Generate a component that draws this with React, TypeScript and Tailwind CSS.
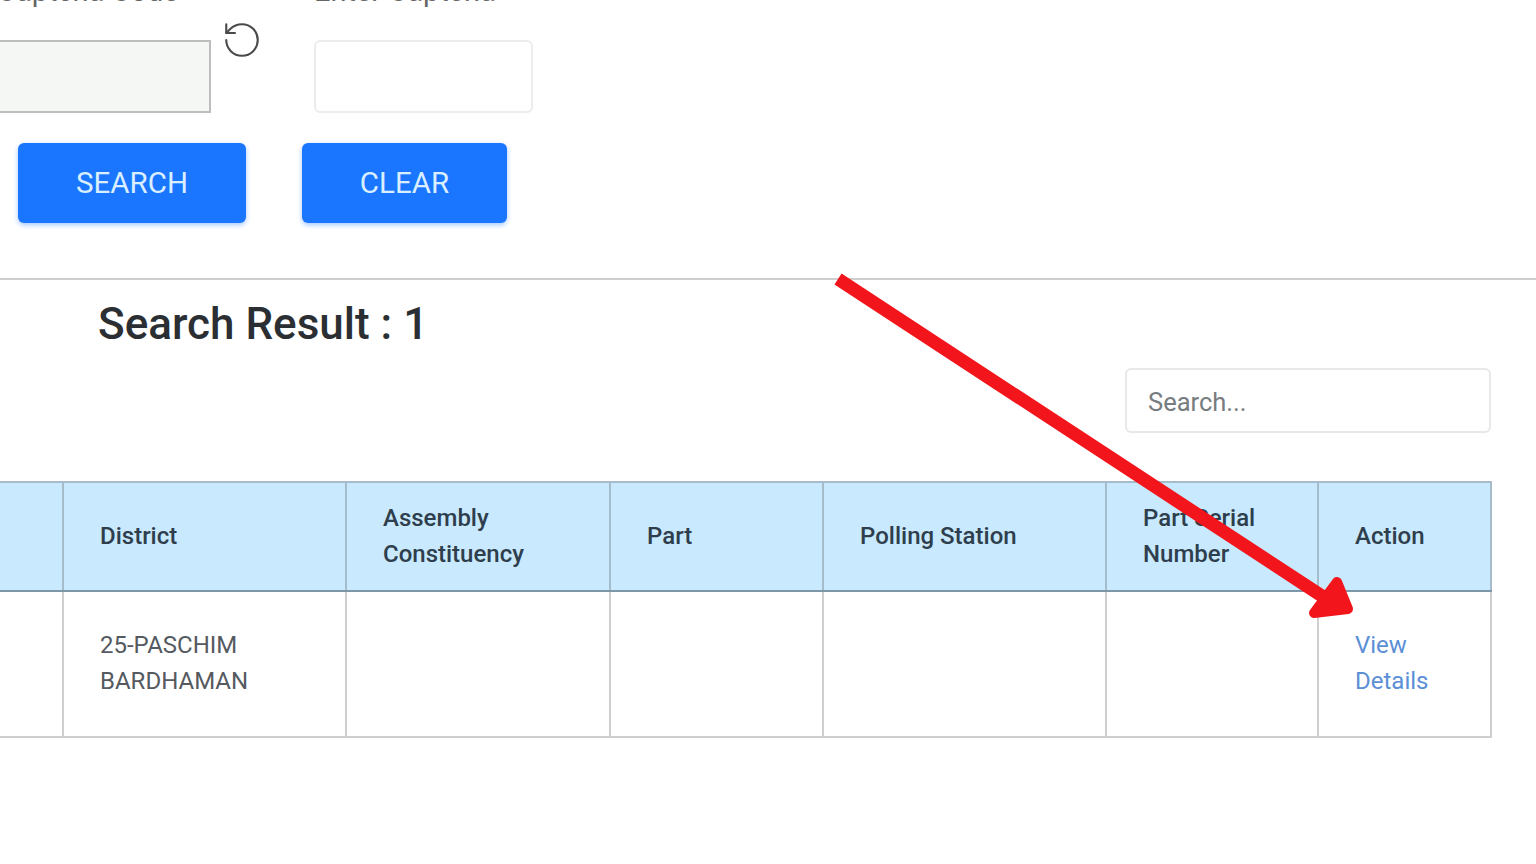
import { RotateCcw } from 'lucide-react';

const headers = [
  { label: '', width: 'w-[163px]' },
  { label: 'District', width: 'w-[283px]' },
  { label: 'Assembly Constituency', width: 'w-[264px]' },
  { label: 'Part', width: 'w-[213px]' },
  { label: 'Polling Station', width: 'w-[283px]' },
  { label: 'Part Serial Number', width: 'w-[212px]' },
  { label: 'Action', width: 'w-[173px]' },
];

export default function App() {
  return (
    <div className="relative w-[1536px] h-[864px] overflow-hidden bg-white font-['Roboto',sans-serif] text-[#444b52]">
      {/* captcha row, the labels are cut off by the top of the picture */}
      <div className="flex -mt-[28px]">
        <div className="-ml-[100px] w-[311px]">
          <label className="block h-[34px] pl-[97px] text-[29px] leading-[38px] whitespace-nowrap text-[#666]">Captcha Code *</label>
          <input
            readOnly
            className="mt-[34px] block h-[73px] w-full border-2 border-[#bdbdbd] bg-[#f5f7f5]"
          />
        </div>
        <button className="mt-[47px] ml-[10px] h-[42px] w-[42px] shrink-0 text-[#4a4a4a]">
          <RotateCcw size={42} strokeWidth={1.2} />
        </button>
        <div className="ml-[51px] w-[219px]">
          <label className="block h-[34px] text-[29px] leading-[38px] whitespace-nowrap text-[#666]">Enter Captcha *</label>
          <input className="mt-[34px] block h-[73px] w-full rounded-md border-2 border-[#ececec] bg-white" />
        </div>
      </div>

      <div className="mt-[30px] flex pl-[18px] gap-[56px]">
        <button className="h-[80px] w-[228px] rounded-md bg-[#1a76ff] text-[29.5px] text-[#d9efff] shadow-[0_2px_5px_rgba(26,118,255,0.4)]">
          SEARCH
        </button>
        <button className="h-[80px] w-[205px] rounded-md bg-[#1a76ff] text-[29.5px] text-[#d9efff] shadow-[0_2px_5px_rgba(26,118,255,0.4)]">
          CLEAR
        </button>
      </div>

      <div className="mt-[55px] border-t-2 border-[#cfcfcf]">
        <h2 className="mt-[17px] pl-[98px] text-[44px] leading-[54px] font-medium text-[#2b2f33]">
          Search Result : 1
        </h2>
        <div className="mt-[17px] flex justify-end pr-[45px]">
          <input
            placeholder="Search..."
            className="h-[65px] w-[366px] rounded-md border-2 border-[#e8e8e8] px-[21px] pt-[2px] text-[25.5px] placeholder:text-[#777c80]"
          />
        </div>

        <div className="-ml-[101px] mt-[48px] w-[1591px]">
          <table className="w-full table-fixed border-collapse text-[24px] leading-[36px]">
            <colgroup>
              {headers.map((h, i) => (
                <col key={i} className={h.width} />
              ))}
            </colgroup>
            <thead>
              <tr className="h-[109px] bg-[#c8e9fe]">
                {headers.map((h, i) => (
                  <th
                    key={i}
                    className="border-2 border-[#a6bccb] border-b-[#7d97a8] px-[36px] pb-[2px] text-left font-medium text-[#2f3e4c]"
                  >
                    {h.label}
                  </th>
                ))}
              </tr>
            </thead>
            <tbody>
              <tr className="h-[146px]">
                <td className="border-2 border-[#cfcfcf]" />
                <td className="border-2 border-[#cfcfcf] px-[36px] pb-[2px] text-[#555a60]">25-PASCHIM BARDHAMAN</td>
                <td className="border-2 border-[#cfcfcf]" />
                <td className="border-2 border-[#cfcfcf]" />
                <td className="border-2 border-[#cfcfcf]" />
                <td className="border-2 border-[#cfcfcf]" />
                <td className="border-2 border-[#cfcfcf] px-[36px] pb-[2px] text-[#5b8fd6]">
                  <a href="#">View Details</a>
                </td>
              </tr>
            </tbody>
          </table>
        </div>
      </div>

      {/* red annotation arrow over the table */}
      <svg className="absolute left-0 top-0 pointer-events-none" width="1536" height="864" viewBox="0 0 1536 864">
        <line x1="838" y1="279" x2="1325" y2="598" stroke="#f2161c" strokeWidth="13" />
        <polygon
          points="1337,582 1314,613 1348,609"
          fill="#f2161c"
          stroke="#f2161c"
          strokeWidth="10"
          strokeLinejoin="round"
        />
      </svg>
    </div>
  );
}
